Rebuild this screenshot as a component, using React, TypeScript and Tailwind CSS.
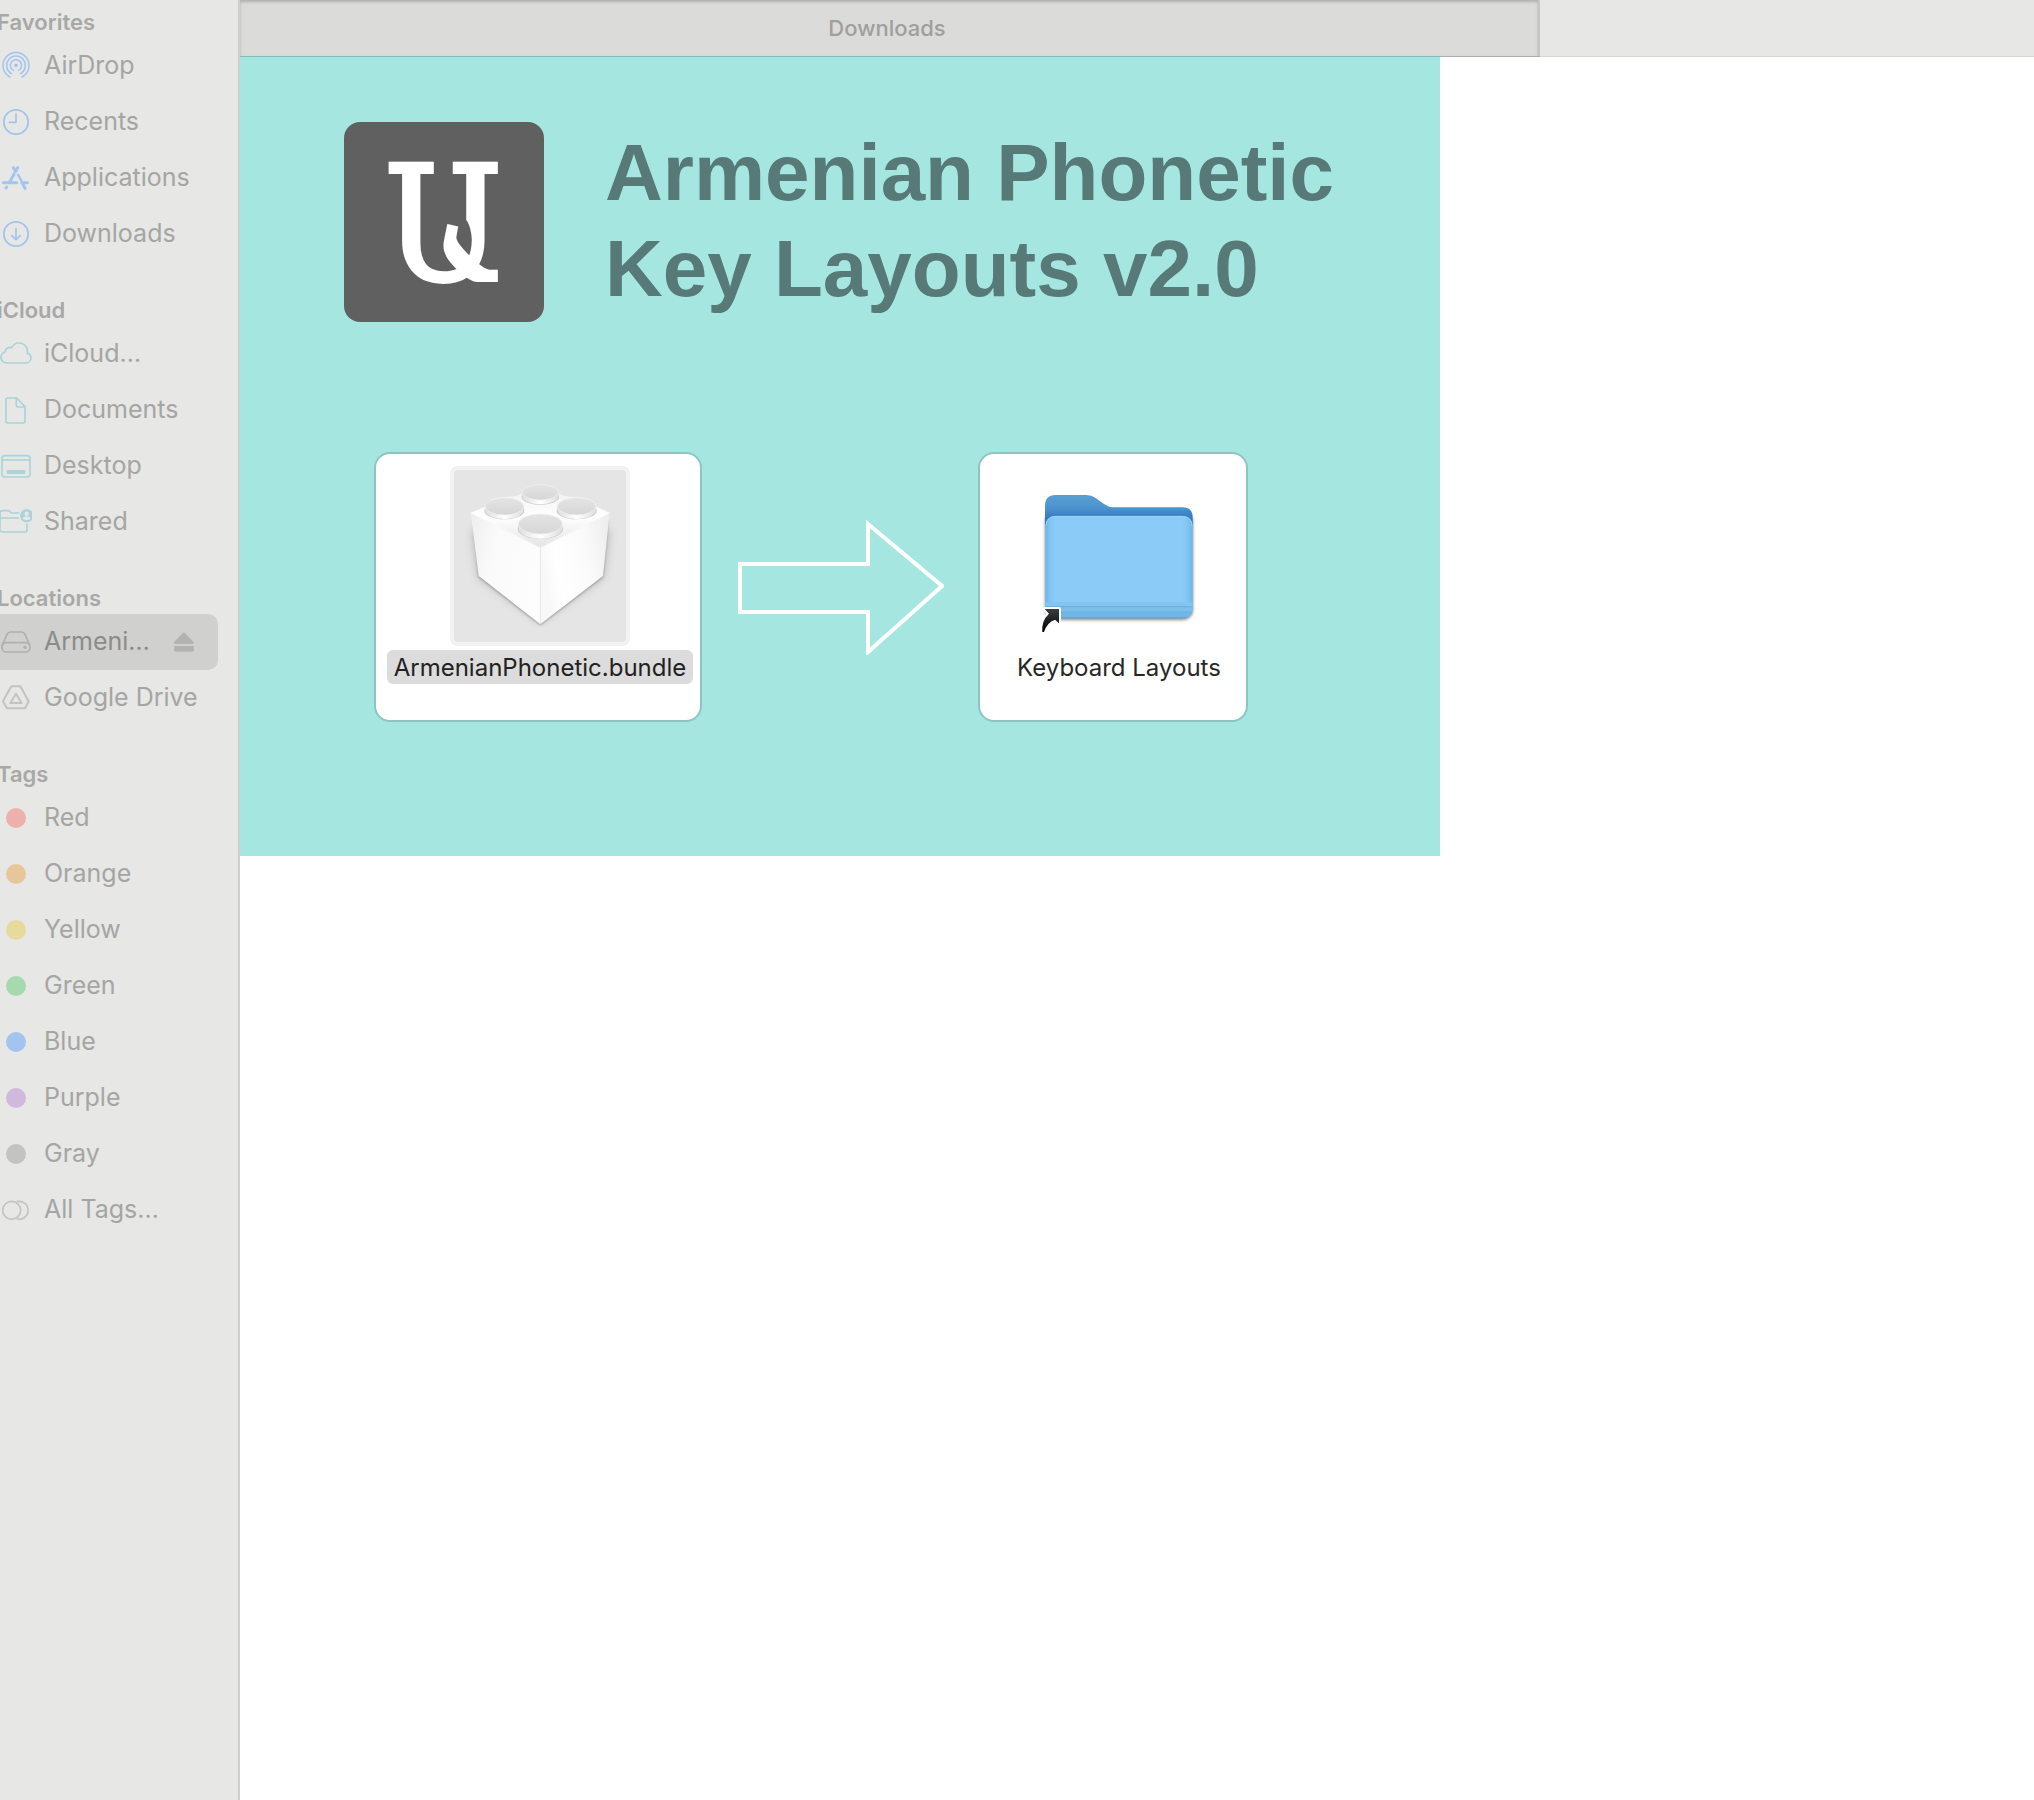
import type { ReactNode } from 'react';
import clsx from 'clsx';

type Item = {
    label: string;
    icon?: ReactNode;
    dot?: string;
    selected?: boolean;
};

type Section = {
    title: string;
    items: Item[];
};

const blue = 'text-[#a2c4ee]';
const teal = 'text-[#abd3da]';
const gray = 'text-[#c3c3c2]';

function Icon({ color, children }: { color: string; children: ReactNode }) {
    return (
        <svg
            viewBox="0 0 96 96"
            className={clsx('h-8 w-8', color)}
            fill="none"
            stroke="currentColor"
            strokeWidth="6"
            strokeLinecap="round"
            strokeLinejoin="round"
            aria-hidden="true"
        >
            {children}
        </svg>
    );
}

const airdrop = (
    <Icon color={blue}>
        <circle cx="48" cy="46" r="5.5" fill="currentColor" stroke="none" />
        <g strokeWidth="4.5">
            <path d="M40 61A17 17 0 1 1 56 61" />
            <path d="M35 71A28 28 0 1 1 61 71" />
            <path d="M30 81A39 39 0 1 1 66 81" />
        </g>
    </Icon>
);

const recents = (
    <Icon color={blue}>
        <circle cx="48" cy="48" r="36.5" strokeWidth="5.5" />
        <path d="M48 24v25H28" strokeWidth="5" />
    </Icon>
);

const applications = (
    <Icon color={blue}>
        <g strokeWidth="9">
            <path d="M53 17 29 60" />
            <path d="M10 62h40" />
            <path d="M40 17l4 7" />
            <path d="M54 40l21 39" />
            <path d="M70 62h12" />
            <path d="M20 75l-2 3" />
        </g>
        <path d="M47 35l14 25" stroke="#e7e7e5" strokeWidth="3" />
    </Icon>
);

const downloads = (
    <Icon color={blue}>
        <circle cx="48" cy="48" r="36.5" strokeWidth="5.5" />
        <path d="M48 32v32M35 53l13 12 13-12" strokeWidth="5" />
    </Icon>
);

const cloud = (
    <Icon color={teal}>
        <path
            d="M22 75C10 75 3 68 3 58c0-8 5-14 12-16 1-10 10-16 20-13 4-8 12-14 22-14 14 0 25 10 25 24v7c7 2 11 7 11 13 0 9-7 16-17 16z"
            strokeWidth="5"
        />
    </Icon>
);

const doc = (
    <Icon color={teal}>
        <path d="M26 12h24l25 26v43q0 6-6 6H24q-6 0-6-6V18q0-6 6-6z" strokeWidth="5" />
        <path d="M49 12v22q0 5 5 5h21" strokeWidth="5" />
    </Icon>
);

const desktop = (
    <Icon color={teal}>
        <rect x="6" y="17" width="84" height="64" rx="8" strokeWidth="5" />
        <path d="M7 30h82" strokeWidth="5" />
        <rect x="20" y="60" width="56" height="12" rx="2" fill="currentColor" stroke="none" />
    </Icon>
);

const shared = (
    <Icon color={teal}>
        <path d="M56 21H36c-4 0-7-7-12-7H8q-8 0-8 8v49q0 7 8 7h66q7 0 7-7V55" strokeWidth="5" />
        <path d="M0 36h55" strokeWidth="4.5" />
        <circle cx="80" cy="29" r="20" fill="currentColor" stroke="none" />
        <circle cx="80" cy="23" r="6.5" fill="#e7e7e5" stroke="none" />
        <path d="M68 39q1-8 12-8t12 8q-12 7-24 0z" fill="#e7e7e5" stroke="none" />
    </Icon>
);

const drive = (
    <Icon color="text-[#b0b0ae]">
        <path d="M7 57 21 25q3-7 10-7h34q7 0 10 7l14 32" strokeWidth="5" />
        <rect x="6" y="50" width="84" height="28" rx="13" strokeWidth="5" />
        <circle cx="75" cy="64" r="5" fill="currentColor" stroke="none" />
    </Icon>
);

const googleDrive = (
    <Icon color={gray}>
        <path d="M34 13h27l25 45-11 21H21L9 58z" strokeWidth="6" />
        <path d="M48 35l17 28H31z" strokeWidth="6" />
    </Icon>
);

const allTags = (
    <Icon color={gray}>
        <circle cx="35" cy="49" r="27" strokeWidth="5" />
        <path d="M50 23a27 27 0 1 1 0 52" strokeWidth="5" strokeLinecap="butt" />
    </Icon>
);

const sections: Section[] = [
    {
        title: 'Favorites',
        items: [
            { label: 'AirDrop', icon: airdrop },
            { label: 'Recents', icon: recents },
            { label: 'Applications', icon: applications },
            { label: 'Downloads', icon: downloads },
        ],
    },
    {
        title: 'iCloud',
        items: [
            { label: 'iCloud…', icon: cloud },
            { label: 'Documents', icon: doc },
            { label: 'Desktop', icon: desktop },
            { label: 'Shared', icon: shared },
        ],
    },
    {
        title: 'Locations',
        items: [
            { label: 'Armeni…', icon: drive, selected: true },
            { label: 'Google Drive', icon: googleDrive },
        ],
    },
    {
        title: 'Tags',
        items: [
            { label: 'Red', dot: 'bg-[#eeb0ad]' },
            { label: 'Orange', dot: 'bg-[#e8c69b]' },
            { label: 'Yellow', dot: 'bg-[#e8d99c]' },
            { label: 'Green', dot: 'bg-[#a6daae]' },
            { label: 'Blue', dot: 'bg-[#a2c4ee]' },
            { label: 'Purple', dot: 'bg-[#d1b9de]' },
            { label: 'Gray', dot: 'bg-[#c3c3c3]' },
            { label: 'All Tags…', icon: allTags },
        ],
    },
];

function Sidebar() {
    return (
        <nav className="w-60 shrink-0 overflow-hidden border-r-2 border-[#cfcfcd] bg-[#e7e7e5] pt-[6px] pr-5">
            {sections.map((section) => (
                <section key={section.title} className="mb-8">
                    <h2 className="-ml-[3px] h-8 text-[22px] leading-8 font-semibold text-[#a8a8a7]">{section.title}</h2>
                    <ul>
                        {section.items.map((item) => (
                            <li
                                key={item.label}
                                className={clsx('flex h-14 items-center rounded-r-[10px]', item.selected && 'bg-[#d0d0ce]')}
                            >
                                <a
                                    href="#"
                                    className={clsx(
                                        'flex items-center gap-3 text-[25px] leading-8 whitespace-nowrap',
                                        item.selected ? 'text-[#8b8b89]' : 'text-[#a5a5a4]',
                                    )}
                                >
                                    <span className="flex w-8 shrink-0 justify-center">
                                        {item.icon ?? <span className={clsx('h-5 w-5 rounded-full', item.dot)} />}
                                    </span>
                                    <span className="pb-0.5">{item.label}</span>
                                </a>
                                {item.selected && (
                                    <button aria-label="Eject" className="mr-6 ml-auto">
                                        <svg viewBox="0 0 57 57" className="h-5 w-5 text-[#b3b3b1]" fill="currentColor">
                                            <path d="M25 3q3-3 6 0l24 25q3 6-3 6H4q-6 0-3-6z" />
                                            <rect y="40" width="57" height="16" rx="4" />
                                        </svg>
                                    </button>
                                )}
                            </li>
                        ))}
                    </ul>
                </section>
            ))}
        </nav>
    );
}

function Stud({ cx, cy, rx, ry, h }: { cx: number; cy: number; rx: number; ry: number; h: number }) {
    return (
        <g>
            <ellipse cx={cx} cy={cy + h + 1} rx={rx + 2} ry={ry} fill="#c4c4c4" />
            <path
                d={`M${cx - rx} ${cy}v${h}a${rx} ${ry} 0 0 0 ${rx * 2} 0v${-h}z`}
                fill="url(#studSide)"
            />
            <ellipse cx={cx} cy={cy} rx={rx} ry={ry} fill="url(#studTop)" stroke="#f1f1f1" strokeWidth="2" />
        </g>
    );
}

function Brick() {
    return (
        <svg viewBox="268 90 516 516" className="h-full w-full" aria-hidden="true">
            <defs>
                <linearGradient id="studTop" x1="0" y1="0" x2="0" y2="1">
                    <stop offset="0" stopColor="#e4e4e4" />
                    <stop offset="1" stopColor="#d6d6d6" />
                </linearGradient>
                <linearGradient id="studSide" x1="0" y1="0" x2="1" y2="0">
                    <stop offset="0" stopColor="#dedede" />
                    <stop offset="0.5" stopColor="#ffffff" />
                    <stop offset="1" stopColor="#dedede" />
                </linearGradient>
                <linearGradient id="leftFace" x1="318" y1="300" x2="527" y2="340" gradientUnits="userSpaceOnUse">
                    <stop offset="0" stopColor="#f0f0f0" />
                    <stop offset="0.35" stopColor="#fafafa" />
                    <stop offset="1" stopColor="#fdfdfd" />
                </linearGradient>
                <linearGradient id="rightFace" x1="527" y1="340" x2="735" y2="300" gradientUnits="userSpaceOnUse">
                    <stop offset="0" stopColor="#f8f8f8" />
                    <stop offset="0.2" stopColor="#ffffff" />
                    <stop offset="0.65" stopColor="#fafafa" />
                    <stop offset="1" stopColor="#eeeeee" />
                </linearGradient>
                <linearGradient id="topFace" x1="0" y1="0" x2="0" y2="1">
                    <stop offset="0" stopColor="#eeeeee" />
                    <stop offset="0.5" stopColor="#ffffff" />
                    <stop offset="1" stopColor="#e3e3e3" />
                </linearGradient>
                <filter id="soft" x="-20%" y="-20%" width="140%" height="140%">
                    <feGaussianBlur stdDeviation="12" />
                </filter>
                <filter id="edge" x="-10%" y="-10%" width="120%" height="120%">
                    <feGaussianBlur stdDeviation="3" />
                </filter>
            </defs>
            <path d="M322 270 340 412 527 545 717 412 735 270z" fill="#9a9a9a" opacity="0.6" filter="url(#soft)" />
            <path d="M325 240 342 411 527 556 715 411 731 240z" fill="#8a8a8a" opacity="0.8" filter="url(#edge)" />
            <path
                d="M318 218 362 200q4-26 60-29 36 0 52-12 12-25 53-26 42 1 54 26 16 12 52 12 56 3 62 29l40 18-208 108z"
                fill="url(#topFace)"
            />
            <path d="M318 218 527 325V553L342 408z" fill="url(#leftFace)" />
            <path d="M735 218 527 325V553L715 408z" fill="url(#rightFace)" />
            <path d="M527 325v226" stroke="#ededed" strokeWidth="2" />
            <path d="M318 218 527 324 735 218" stroke="#ffffff" strokeWidth="2" fill="none" />
            <Stud cx={527} cy={157} rx={54} ry={23} h={13} />
            <Stud cx={419} cy={199} rx={58} ry={26} h={12} />
            <Stud cx={636} cy={199} rx={58} ry={26} h={12} />
            <Stud cx={527} cy={252} rx={66} ry={30} h={14} />
        </svg>
    );
}

function Folder() {
    return (
        <svg viewBox="180 78 540 540" className="h-[180px] w-[180px]" aria-hidden="true">
            <defs>
                <linearGradient id="folderBack" x1="0" y1="165" x2="0" y2="235" gradientUnits="userSpaceOnUse">
                    <stop offset="0" stopColor="#5a9fd2" />
                    <stop offset="0.55" stopColor="#4c94cf" />
                    <stop offset="1" stopColor="#3679c0" />
                </linearGradient>
                <linearGradient id="folderEdge" x1="0" y1="0" x2="1" y2="0">
                    <stop offset="0" stopColor="#6bb5e8" />
                    <stop offset="0.08" stopColor="#8accf7" stopOpacity="0" />
                    <stop offset="0.92" stopColor="#8accf7" stopOpacity="0" />
                    <stop offset="1" stopColor="#6bb5e8" />
                </linearGradient>
                <linearGradient id="aliasFill" x1="0" y1="0" x2="0" y2="1">
                    <stop offset="0" stopColor="#3a3d42" />
                    <stop offset="1" stopColor="#000000" />
                </linearGradient>
                <filter id="folderShadow" x="-10%" y="-10%" width="120%" height="120%">
                    <feGaussianBlur stdDeviation="4" />
                </filter>
                <clipPath id="folderFront">
                    <rect x="229" y="228" width="442" height="307" rx="30" />
                </clipPath>
            </defs>
            <rect x="228" y="215" width="444" height="325" rx="30" fill="#555555" opacity="0.7" filter="url(#folderShadow)" />
            <path
                d="M228 197q0-32 32-32h92q16 0 27 8l25 18q15 11 32 11h205q30 0 30 30v28H228z"
                fill="url(#folderBack)"
            />
            <g clipPath="url(#folderFront)">
                <rect x="229" y="228" width="442" height="307" fill="#8accf7" />
                <rect x="229" y="228" width="442" height="307" fill="url(#folderEdge)" />
                <path d="M229 487h442v48H229z" fill="#82c5f0" />
                <path d="M229 500h442v35H229z" fill="#7cbfeb" />
                <path d="M229 517h442v18H229z" fill="#70b6e6" />
                <path d="M229 500h442M229 516h442" stroke="#6aafdf" strokeWidth="3" />
                <path d="M229 533h442" stroke="#5ea5d8" strokeWidth="3" />
            </g>
            <path d="M231 258q0-29 29-29h380q29 0 29 29" stroke="#9bd6fb" strokeWidth="2.5" fill="none" />
            <path
                d="M227 507h43v43l-12-11q-24 8-33 37h-5q-3-34 20-55z"
                fill="url(#aliasFill)"
                stroke="#ffffff"
                strokeWidth="12"
                strokeLinejoin="round"
                paintOrder="stroke"
            />
        </svg>
    );
}

function Arrow() {
    return (
        <svg viewBox="0 0 206 136" className="mr-[34px] ml-9 w-[206px]" fill="none" stroke="#ffffff" strokeWidth="4" aria-hidden="true">
            <path d="M2 45h128V5l74 62-74 66V93H2z" />
        </svg>
    );
}

function Banner() {
    return (
        <div className="h-[800px] w-[1200px] max-w-full overflow-hidden bg-[#a6e6e1] pt-[66px]">
            <div className="flex gap-[61px] pl-[104px]">
                <div className="flex h-[200px] w-[200px] shrink-0 items-center justify-center rounded-[16px] bg-[#606060] pt-1.5">
                    <span className="font-['DejaVu_Serif_Condensed',serif] text-[160px] leading-none text-white [-webkit-text-stroke:4px_white]">
                        Ա
                    </span>
                </div>
                <h1 className="pt-[3px] font-['Liberation_Sans',Arial,sans-serif] text-[80px] leading-24 font-bold whitespace-nowrap text-[#577977]">
                    Armenian Phonetic
                    <br />
                    Key Layouts v2.0
                </h1>
            </div>

            <div className="mt-[130px] flex items-center pl-[134px]">
                <figure className="flex h-[270px] w-[328px] flex-col items-center gap-1 rounded-2xl border-2 border-[#8cc5c1] bg-white pt-3 pl-1">
                    <div className="h-[180px] w-[180px] rounded-lg border-4 border-[#f2f2f2] bg-[#e5e5e5]">
                        <Brick />
                    </div>
                    <figcaption className="rounded-md bg-[#dcdcdc] px-[7px] pt-0.5 text-2xl text-[#222222]">
                        ArmenianPhonetic.bundle
                    </figcaption>
                </figure>
                <Arrow />
                <figure className="flex h-[270px] w-[270px] flex-col items-center gap-1 rounded-2xl border-2 border-[#8cc5c1] bg-white pt-3 pl-3">
                    <Folder />
                    <figcaption className="pt-0.5 text-2xl text-[#272727]">Keyboard Layouts</figcaption>
                </figure>
            </div>
        </div>
    );
}

export default function App() {
    return (
        <div className="flex min-h-screen bg-white font-[Inter,sans-serif]">
            <Sidebar />
            <main className="min-w-0 flex-1">
                <header className="flex h-14 bg-[#e7e7e5] shadow-[0_1px_0_#d6d6d5]">
                    <div className="flex w-[1300px] items-center justify-center border-r-2 border-[#c6c6c4] bg-[#dbdbd9] pr-1 text-[22px] font-medium text-[#9f9f9d] shadow-[inset_0_2px_3px_#b0b0ae,0_1px_0_#00000030]">
                        Downloads
                    </div>
                </header>
                <Banner />
            </main>
        </div>
    );
}
